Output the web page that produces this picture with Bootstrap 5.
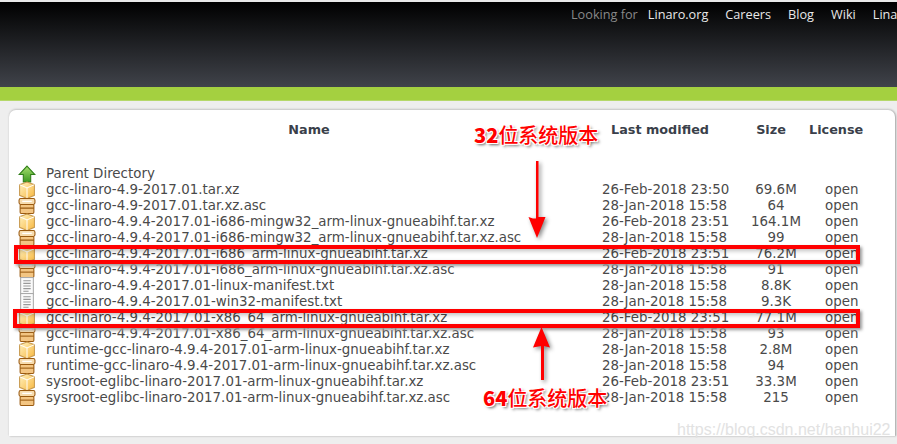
<!DOCTYPE html>
<html lang="en">
<head>
<meta charset="UTF-8" />
<title>Index of gcc-linaro</title>
<link href="https://cdn.jsdelivr.net/npm/bootstrap@5.3.0/dist/css/bootstrap.min.css" rel="stylesheet" />
<style>
  html, body { height: 444px; overflow: hidden; }
  body { background: #eee; font-family: "DejaVu Sans", sans-serif; color: #444; position: relative; border-top: 2px solid #e8e8e8; }
  .top-band { height: 85px; background: linear-gradient(#000, #40434a); padding: 3px 0 0 571px; font-family: "Open Sans", sans-serif; font-size: 12.7px; white-space: nowrap; overflow: hidden; }
  .top-band span { color: #888; margin-right: 10px; }
  .top-band a { color: #e8e8e8; text-decoration: none; margin-right: 17px; }
  .green-band { height: 14px; background: #a4d040; border-bottom: 1px solid #b5d86a; }
  .page-body { padding: 9px 2px 0 9px; }
  .list-panel { background: #fff; border-radius: 7px 7px 0 0; box-shadow: 0 -1px 2px #ccc, 1px 0 2px #999; height: 326px; padding-top: 10px; overflow: hidden; }
  .files { width: 100%; table-layout: fixed; font-size: 13.4px; color: #4a4a4a; }
  .files th { font-weight: 700; font-size: 12.8px; height: 20px; padding: 0; color: #3a3f4a; text-align: center; white-space: nowrap; }
  .files td { height: 16px; padding: 0; line-height: 16px; white-space: nowrap; }
  .files .head-gap td { height: 26px; }
  .files .ic { width: 37px; padding-left: 9px; }
  .files .ic svg { display: block; width: 18px; height: 18px; margin: -1px 0; }
  .files .nm { width: 556px; }
  .files th.nm { padding-right: 30px; }
  .files .when { width: 126px; }
  .files th.when { padding-right: 10px; }
  .files .sz { width: 96px; text-align: center; }
  .files th.sz { padding-right: 10px; }
  .files .lic { padding-left: 1px; }
  .files th.lic { padding-left: 0; text-align: left; }
  .files th.lic span { margin-left: -15px; }
  .bottom-box { margin: 32px 10px 0 10px; height: 20px; border: 1px solid #ddd; border-radius: 6px 6px 0 0; }
  .hi-box { position: absolute; border: 4px solid #f00; box-shadow: 2px 2px 3px #999, inset 0 2px 4px rgba(0, 0, 0, .25); }
  .callout { position: absolute; font-family: "Noto Sans CJK SC", sans-serif; font-weight: 500; font-size: 20px; line-height: 24px; color: #f00; white-space: nowrap; text-shadow: 1px 1px 0 #fff, -1px -1px 0 #fff, 1px -1px 0 #fff, -1px 1px 0 #fff, 2px 2px 3px #666; }
  .callout b { font-weight: 900; }
  .arrow-mark { position: absolute; filter: drop-shadow(2px 2px 2px #888); }
  .watermark { position: absolute; left: 677px; top: 416px; font-family: "Liberation Sans", sans-serif; font-size: 16px; color: #e2e2e2; white-space: nowrap; }
</style>
</head>
<body>
<svg width="0" height="0" class="d-block" style="position:absolute">
  <defs>
    <linearGradient id="boxFill" x1="0" y1="0" x2="1" y2="1"><stop offset="0" stop-color="#fff2c0"/><stop offset="1" stop-color="#f8b840"/></linearGradient>
    <linearGradient id="upFill" x1="0" y1="0" x2="0" y2="1"><stop offset="0" stop-color="#a8e070"/><stop offset="1" stop-color="#3c9a20"/></linearGradient>
    <symbol id="i-up" viewBox="0 0 17 17"><path d="M8.500 1 16 9h-4v7H5V9H1z" fill="url(#upFill)" stroke="#2f7d18"/></symbol>
    <symbol id="i-pkg" viewBox="0 0 17 17"><path d="M8.500 1 15.500 3.500v10l-7 3-7-3v-10z" fill="url(#boxFill)" stroke="#c89a50"/><path d="M1.500 3.500l7 3 7-3M8.500 6.500v10" fill="none" stroke="#fff" stroke-width=".9"/></symbol>
    <symbol id="i-crate" viewBox="0 0 17 17"><rect x="1" y="1.500" width="15" height="5.500" rx="1.500" fill="#f7dcae" stroke="#9a5a10"/><rect x="2" y="7" width="13" height="8.500" rx="1" fill="#f3c582" stroke="#9a5a10"/><path d="M2 10.500h13" stroke="#9a5a10"/><rect x="4" y="3.500" width="9" height="1.200" fill="#fff"/></symbol>
    <symbol id="i-txt" viewBox="0 0 17 17"><rect x="2.500" y=".5" width="12" height="16" fill="#fafafa" stroke="#aaa"/><path d="M5 3.500h7M5 6h7M5 8.500h7M5 11h7M5 13.500h5" stroke="#999"/></symbol>
  </defs>
</svg>

<div class="top-band"><span>Looking for</span><a href="#">Linaro.org</a><a href="#">Careers</a><a href="#">Blog</a><a href="#">Wiki</a><a href="#">Lina</a></div>
<div class="green-band"></div>

<div class="page-body">
  <div class="list-panel">
    <table class="files">
      <thead>
        <tr><th class="ic"></th><th class="nm">Name</th><th class="when">Last modified</th><th class="sz">Size</th><th class="lic"><span>License</span></th></tr>
      </thead>
      <tbody>
        <tr class="head-gap"><td colspan="5"></td></tr>
        <tr><td class="ic"><svg><use href="#i-up"/></svg></td><td>Parent Directory</td><td></td><td class="sz"></td><td class="lic"></td></tr>
        <tr><td class="ic"><svg><use href="#i-pkg"/></svg></td><td>gcc-linaro-4.9-2017.01.tar.xz</td><td class="when">26-Feb-2018 23:50</td><td class="sz">69.6M</td><td class="lic">open</td></tr>
        <tr><td class="ic"><svg><use href="#i-crate"/></svg></td><td>gcc-linaro-4.9-2017.01.tar.xz.asc</td><td class="when">28-Jan-2018 15:58</td><td class="sz">64</td><td class="lic">open</td></tr>
        <tr><td class="ic"><svg><use href="#i-pkg"/></svg></td><td>gcc-linaro-4.9.4-2017.01-i686-mingw32_arm-linux-gnueabihf.tar.xz</td><td class="when">26-Feb-2018 23:51</td><td class="sz">164.1M</td><td class="lic">open</td></tr>
        <tr><td class="ic"><svg><use href="#i-crate"/></svg></td><td>gcc-linaro-4.9.4-2017.01-i686-mingw32_arm-linux-gnueabihf.tar.xz.asc</td><td class="when">28-Jan-2018 15:58</td><td class="sz">99</td><td class="lic">open</td></tr>
        <tr><td class="ic"><svg><use href="#i-pkg"/></svg></td><td>gcc-linaro-4.9.4-2017.01-i686_arm-linux-gnueabihf.tar.xz</td><td class="when">26-Feb-2018 23:51</td><td class="sz">76.2M</td><td class="lic">open</td></tr>
        <tr><td class="ic"><svg><use href="#i-crate"/></svg></td><td>gcc-linaro-4.9.4-2017.01-i686_arm-linux-gnueabihf.tar.xz.asc</td><td class="when">28-Jan-2018 15:58</td><td class="sz">91</td><td class="lic">open</td></tr>
        <tr><td class="ic"><svg><use href="#i-txt"/></svg></td><td>gcc-linaro-4.9.4-2017.01-linux-manifest.txt</td><td class="when">28-Jan-2018 15:58</td><td class="sz">8.8K</td><td class="lic">open</td></tr>
        <tr><td class="ic"><svg><use href="#i-txt"/></svg></td><td>gcc-linaro-4.9.4-2017.01-win32-manifest.txt</td><td class="when">28-Jan-2018 15:58</td><td class="sz">9.3K</td><td class="lic">open</td></tr>
        <tr><td class="ic"><svg><use href="#i-pkg"/></svg></td><td>gcc-linaro-4.9.4-2017.01-x86_64_arm-linux-gnueabihf.tar.xz</td><td class="when">26-Feb-2018 23:51</td><td class="sz">77.1M</td><td class="lic">open</td></tr>
        <tr><td class="ic"><svg><use href="#i-crate"/></svg></td><td>gcc-linaro-4.9.4-2017.01-x86_64_arm-linux-gnueabihf.tar.xz.asc</td><td class="when">28-Jan-2018 15:58</td><td class="sz">93</td><td class="lic">open</td></tr>
        <tr><td class="ic"><svg><use href="#i-pkg"/></svg></td><td>runtime-gcc-linaro-4.9.4-2017.01-arm-linux-gnueabihf.tar.xz</td><td class="when">28-Jan-2018 15:58</td><td class="sz">2.8M</td><td class="lic">open</td></tr>
        <tr><td class="ic"><svg><use href="#i-crate"/></svg></td><td>runtime-gcc-linaro-4.9.4-2017.01-arm-linux-gnueabihf.tar.xz.asc</td><td class="when">28-Jan-2018 15:58</td><td class="sz">94</td><td class="lic">open</td></tr>
        <tr><td class="ic"><svg><use href="#i-pkg"/></svg></td><td>sysroot-eglibc-linaro-2017.01-arm-linux-gnueabihf.tar.xz</td><td class="when">26-Feb-2018 23:51</td><td class="sz">33.3M</td><td class="lic">open</td></tr>
        <tr><td class="ic"><svg><use href="#i-crate"/></svg></td><td>sysroot-eglibc-linaro-2017.01-arm-linux-gnueabihf.tar.xz.asc</td><td class="when">28-Jan-2018 15:58</td><td class="sz">215</td><td class="lic">open</td></tr>
      </tbody>
    </table>
    <div class="bottom-box"></div>
  </div>
</div>

<!-- annotations drawn on top of the screenshot -->
<div class="hi-box" style="left:14px;top:243px;width:846px;height:19px"></div>
<div class="hi-box" style="left:13px;top:307px;width:847px;height:19px"></div>
<div class="callout" style="left:474px;top:121px"><b>32</b>位系统版本</div>
<div class="callout" style="left:483px;top:384px"><b>64</b>位系统版本</div>
<svg class="arrow-mark" style="left:525px;top:157px" width="24" height="82" viewBox="0 0 24 82"><path d="M11 2h2.500v56H20.500L12 79 3.500 58 8 59.500h3z" fill="#f00"/></svg>
<svg class="arrow-mark" style="left:530px;top:324px" width="24" height="56" viewBox="0 0 24 56"><path d="M11.500 1 20 21.500 14 20v34h-3V20L3 21.500z" fill="#f00"/></svg>
<div class="watermark">https://blog.csdn.net/hanhui22</div>
</body>
</html>
